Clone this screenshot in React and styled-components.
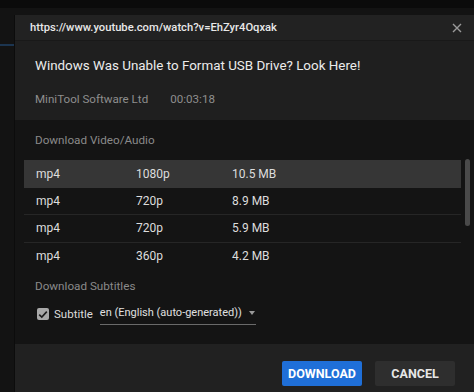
import React from "react";
import styled, { createGlobalStyle } from "styled-components";

const GlobalStyle = createGlobalStyle`
  html, body { margin: 0; padding: 0; background: #121212; }
  body { font-family: Roboto, "Noto Sans", Arial, sans-serif; }
  * { box-sizing: border-box; }
`;

const formats = [
  { ext: "mp4", res: "1080p", size: "10.5 MB" },
  { ext: "mp4", res: "720p", size: "8.9 MB" },
  { ext: "mp4", res: "720p", size: "5.9 MB" },
  { ext: "mp4", res: "360p", size: "4.2 MB" },
];

const App = () => {
  return (
    <>
      <GlobalStyle />
      <Page>
        <TopStrip />
        <Body>
          <SideStrip>
            <BlueLine />
          </SideStrip>
          <Dialog>
            <Header>
              <Url>https://www.youtube.com/watch?v=EhZyr4Oqxak</Url>
              <Close>
                <svg width="10" height="10" viewBox="0 0 10 10">
                  <path d="M1 1L9 9M9 1L1 9" stroke="#9a9a9a" strokeWidth="1.4" />
                </svg>
              </Close>
            </Header>
            <Info>
              <Title>Windows Was Unable to Format USB Drive? Look Here!</Title>
              <Meta>
                <span>MiniTool Software Ltd</span>
                <span>00:03:18</span>
              </Meta>
            </Info>
            <Content>
              <SectionLabel>Download Video/Audio</SectionLabel>
              <ListWrap>
                <List>
                  {formats.map((f, i) => (
                    <Row key={i} $active={i === 0} $last={i === formats.length - 1}>
                      <Cell $w={100}>{f.ext}</Cell>
                      <Cell $w={96}>{f.res}</Cell>
                      <Cell>{f.size}</Cell>
                    </Row>
                  ))}
                </List>
                <Scrollbar />
              </ListWrap>
              <SectionLabel $top={8}>Download Subtitles</SectionLabel>
              <SubRow>
                <Check>
                  <svg width="10" height="9" viewBox="0 0 10 9">
                    <path d="M1.2 4.6L3.8 7.1L8.8 1.6" stroke="#1c1c1c" strokeWidth="1.6" fill="none" />
                  </svg>
                </Check>
                <SubLabel>Subtitle</SubLabel>
                <Select>
                  <span>en (English (auto-generated))</span>
                  <Caret />
                </Select>
              </SubRow>
            </Content>
            <Footer>
              <Button $primary>DOWNLOAD</Button>
              <Button>CANCEL</Button>
            </Footer>
          </Dialog>
        </Body>
      </Page>
    </>
  );
};

const Page = styled.div`
  width: 474px;
  height: 392px;
  overflow: hidden;
  display: flex;
  flex-direction: column;
  background: #131313;
`;

const TopStrip = styled.div`
  height: 8px;
  background: #0b0b0b;
  flex-shrink: 0;
`;

const Body = styled.div`
  flex: 1;
  display: flex;
  padding-top: 7px;
  min-height: 0;
`;

const SideStrip = styled.div`
  width: 15px;
  flex-shrink: 0;
  border-right: 1px solid #0c0c0c;
  overflow: hidden;
`;

const BlueLine = styled.div`
  margin-top: 29px;
  height: 2px;
  background: #1c3550;
`;

const Dialog = styled.div`
  flex: 1;
  display: flex;
  flex-direction: column;
  background: #141414;
  min-width: 0;
`;

const Header = styled.div`
  height: 26px;
  background: #222222;
  border-bottom: 1px solid #191919;
  display: flex;
  align-items: center;
  justify-content: space-between;
  padding: 0 12px 0 15px;
`;

const Url = styled.div`
  font-size: 11.2px;
  font-weight: 500;
  color: #e8e8e8;
  white-space: nowrap;
`;

const Close = styled.div`
  display: flex;
  align-items: center;
`;

const Info = styled.div`
  background: #1f1f1f;
  padding: 16px 20px 0;
  height: 79px;
`;

const Title = styled.div`
  font-size: 13.4px;
  color: #ececec;
  line-height: 18px;
  white-space: nowrap;
`;

const Meta = styled.div`
  display: flex;
  gap: 22px;
  margin-top: 17px;
  font-size: 11.6px;
  color: #8e8e8e;
`;

const Content = styled.div`
  flex: 1;
  padding: 12px 0 0 9px;
`;

const SectionLabel = styled.div`
  font-size: 11.7px;
  color: #8a8a8a;
  padding-left: 11px;
  margin-top: ${(p) => p.$top || 0}px;
  line-height: 16px;
`;

const ListWrap = styled.div`
  display: flex;
  align-items: flex-start;
  gap: 4px;
  margin-top: 12px;
`;

const List = styled.div`
  width: 437px;
`;

const Row = styled.div`
  display: flex;
  align-items: center;
  height: 27.5px;
  padding-left: 12px;
  background: ${(p) => (p.$active ? "#363636" : "transparent")};
  border-bottom: ${(p) => (p.$last || p.$active ? "none" : "1px solid #262626")};
  font-size: 12px;
  color: #dddddd;
`;

const Cell = styled.div`
  width: ${(p) => (p.$w ? `${p.$w}px` : "auto")};
`;

const Scrollbar = styled.div`
  width: 5px;
  height: 67px;
  margin-top: -1px;
  border-radius: 3px;
  background: #4a4a4a;
`;

const SubRow = styled.div`
  display: flex;
  align-items: center;
  padding-left: 13px;
  margin-top: 9px;
  height: 22px;
`;

const Check = styled.div`
  width: 12px;
  height: 12px;
  border-radius: 2px;
  background: #a8a8a8;
  display: flex;
  align-items: center;
  justify-content: center;
`;

const SubLabel = styled.div`
  font-size: 11.5px;
  color: #dcdcdc;
  margin-left: 5px;
`;

const Select = styled.div`
  display: flex;
  align-items: center;
  margin-left: 7px;
  width: 156px;
  height: 22px;
  border-bottom: 1px solid #6a6a6a;
  font-size: 11px;
  color: #e0e0e0;
  padding-bottom: 2px;
  justify-content: space-between;
  white-space: nowrap;
`;

const Caret = styled.div`
  width: 0;
  height: 0;
  border-left: 3.5px solid transparent;
  border-right: 3.5px solid transparent;
  border-top: 4px solid #9a9a9a;
  margin-right: 1px;
`;

const Footer = styled.div`
  height: 48px;
  background: #212121;
  display: flex;
  align-items: center;
  justify-content: flex-end;
  gap: 13px;
  padding: 11px 19px 0 0;
  flex-shrink: 0;
`;

const Button = styled.button`
  width: 80px;
  height: 25px;
  border: none;
  border-radius: 2px;
  font-family: Roboto, Arial, sans-serif;
  font-size: 12.5px;
  font-weight: 700;
  color: ${(p) => (p.$primary ? "#ffffff" : "#e6e6e6")};
  background: ${(p) => (p.$primary ? "#1f6fd8" : "#2e2e2e")};
  padding: 0;
`;

export default App;
